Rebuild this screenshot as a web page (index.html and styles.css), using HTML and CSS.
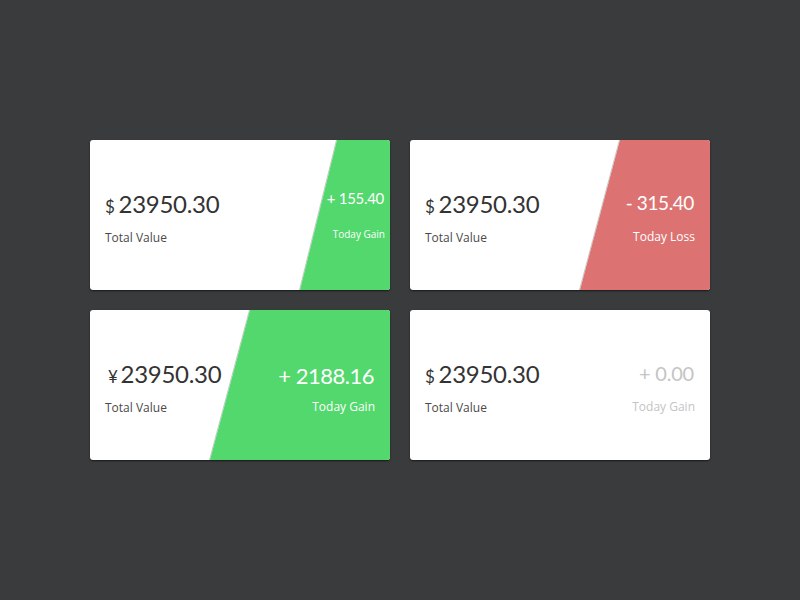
FILE: index.html
```
<!DOCTYPE html>
<html>
<head>
<meta charset="utf-8">
<link rel="stylesheet" href="styles.css">
</head>
<body>
<main class="grid">
  <section class="card">
    <svg class="slant" viewBox="0 0 300 150" preserveAspectRatio="none"><polygon class="edge" points="246,0 247,0 210,150 209,150"/><polygon class="gain" points="247,0 300,0 300,150 210,150"/></svg>
    <div class="left">
      <div class="value"><span class="cur">$</span>23950.30</div>
      <div class="label">Total Value</div>
    </div>
    <div class="right r1 light">
      <div class="value">+ 155.40</div>
      <div class="label">Today Gain</div>
    </div>
  </section>
  <section class="card">
    <svg class="slant" viewBox="0 0 300 150" preserveAspectRatio="none"><polygon class="edge" points="209,0 210,0 170,150 169,150"/><polygon class="loss" points="210,0 300,0 300,150 170,150"/></svg>
    <div class="left">
      <div class="value"><span class="cur">$</span>23950.30</div>
      <div class="label">Total Value</div>
    </div>
    <div class="right r2 light">
      <div class="value">- 315.40</div>
      <div class="label">Today Loss</div>
    </div>
  </section>
  <section class="card">
    <svg class="slant" viewBox="0 0 300 150" preserveAspectRatio="none"><polygon class="edge" points="159,0 160,0 120,150 119,150"/><polygon class="gain" points="160,0 300,0 300,150 120,150"/></svg>
    <div class="left">
      <div class="value"><span class="cur yen">¥</span>23950.30</div>
      <div class="label">Total Value</div>
    </div>
    <div class="right r3 light">
      <div class="value">+ 2188.16</div>
      <div class="label">Today Gain</div>
    </div>
  </section>
  <section class="card">
    <div class="left">
      <div class="value"><span class="cur">$</span>23950.30</div>
      <div class="label">Total Value</div>
    </div>
    <div class="right r4 muted">
      <div class="value">+ 0.00</div>
      <div class="label">Today Gain</div>
    </div>
  </section>
</main>
</body>
</html>
```
FILE: styles.css
```
html, body {
  margin: 0;
  height: 100%;
}
body {
  background: #3a3b3d;
  display: flex;
  align-items: center;
  justify-content: center;
  font-family: "Open Sans", sans-serif;
}
.grid {
  display: grid;
  grid-template-columns: 300px 300px;
  grid-template-rows: 150px 150px;
  gap: 20px;
}
.card {
  position: relative;
  background: #fff;
  border-radius: 3px;
  overflow: hidden;
  box-shadow: 0 1px 2px rgba(0,0,0,0.6);
  display: flex;
  justify-content: space-between;
  align-items: flex-start;
  padding: 0 15px;
}
.slant {
  position: absolute;
  left: 0;
  top: 0;
  width: 100%;
  height: 100%;
}
.slant .gain { fill: #52d86c; }
.slant .loss { fill: #dc7372; }
.slant .edge { fill: #c8c8c8; }
.left, .right {
  position: relative;
  display: flex;
  flex-direction: column;
}
.left { margin-top: 49px; }
.right { align-items: flex-end; }
.value {
  font-family: Lato, sans-serif;
  font-weight: 400;
  font-size: 24px;
  line-height: 30px;
  color: #333;
  white-space: nowrap;
  letter-spacing: -0.3px;
}
.cur {
  font-size: 17px;
  margin-right: 4px;
}
.cur.yen {
  margin-left: 3px;
  margin-right: 3px;
}
.label {
  margin-top: 8px;
  font-size: 12px;
  line-height: 16px;
  color: #4a4a4a;
}
.right .value { margin-right: 1px; }
.right.light .value { color: #fff; }
.right.light .label { color: #fff; }

.r1 { margin-top: 46px; margin-right: -10px; }
.r1 .value { font-size: 15px; line-height: 24px; letter-spacing: -0.3px; }
.r1 .label { font-size: 10px; line-height: 14px; margin-top: 17px; color: #eafbee; }

.r2 { margin-top: 48px; }
.r2 .value { font-size: 19px; letter-spacing: -0.4px; }
.r2 .label { margin-top: 11px; }

.r3 { margin-top: 51px; }
.r3 .value { font-size: 22px; letter-spacing: -0.5px; }
.r3 .label { margin-top: 8px; }

.r4 { margin-top: 48px; }
.r4 .value { font-size: 20px; letter-spacing: -0.2px; }
.r4 .label { margin-top: 11px; }
.right.muted .value { color: #c4c4c4; }
.right.muted .label { color: #c4c4c4; }
```
